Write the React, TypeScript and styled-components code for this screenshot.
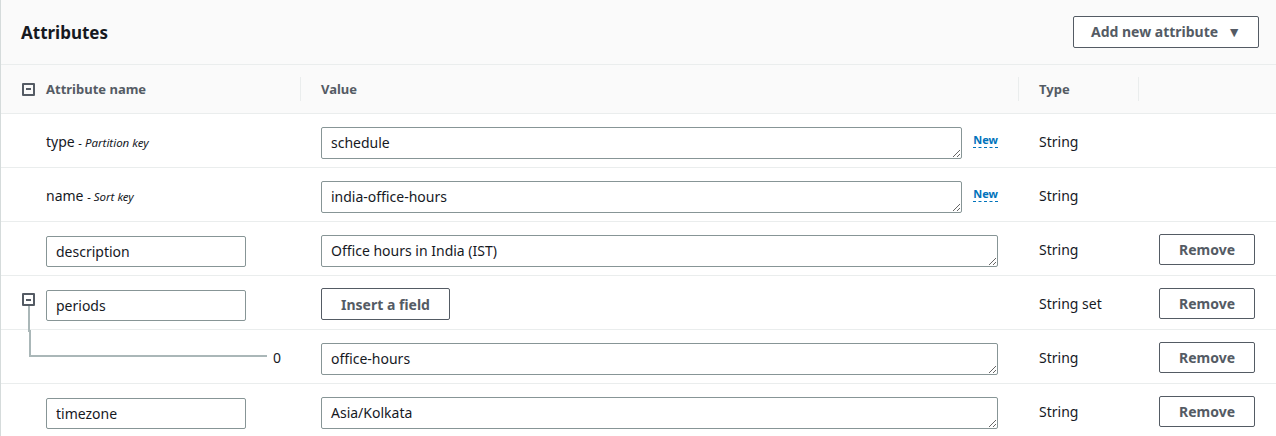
import React from 'react';
import styled, { createGlobalStyle } from 'styled-components';

const GlobalStyle = createGlobalStyle`
	html, body {
		margin: 0;
		padding: 0;
		background: #ffffff;
	}
	body {
		font-family: 'Noto Sans', 'Open Sans', 'Liberation Sans', sans-serif;
		color: #16191f;
	}
`;

interface Attr {
	kind: 'key' | 'field' | 'set' | 'item';
	name: string;
	keyLabel?: string;
	value?: string;
	type: string;
	isNew?: boolean;
	removable?: boolean;
}

const rows: Attr[] = [
	{ kind: 'key', name: 'type', keyLabel: 'Partition key', value: 'schedule', type: 'String', isNew: true },
	{ kind: 'key', name: 'name', keyLabel: 'Sort key', value: 'india-office-hours', type: 'String', isNew: true },
	{ kind: 'field', name: 'description', value: 'Office hours in India (IST)', type: 'String', removable: true },
	{ kind: 'set', name: 'periods', type: 'String set', removable: true },
	{ kind: 'item', name: '0', value: 'office-hours', type: 'String', removable: true },
	{ kind: 'field', name: 'timezone', value: 'Asia/Kolkata', type: 'String', removable: true },
];

const App: React.FC = () => {
	return (
		<Page>
			<GlobalStyle />
			<Header>
				<Title>Attributes</Title>
				<OutlineButton>
					Add new attribute <Caret>▼</Caret>
				</OutlineButton>
			</Header>
			<HeadRow>
				<HeadCell>
					<Toggle />
					Attribute name
				</HeadCell>
				<HeadCell divider>Value</HeadCell>
				<HeadCell divider>Type</HeadCell>
				<HeadCell divider />
			</HeadRow>
			{rows.map((r, i) => (
				<Row key={i}>
					<NameCell tree={r.kind === 'set' || r.kind === 'item'}>
						{r.kind === 'key' && (
							<KeyName>
								{r.name} <KeyLabel>- {r.keyLabel}</KeyLabel>
							</KeyName>
						)}
						{r.kind === 'field' && <NameInput defaultValue={r.name} />}
						{r.kind === 'set' && (
							<>
								<Toggle tree />
								<NameInput defaultValue={r.name} />
							</>
						)}
						{r.kind === 'item' && (
							<>
								<Branch />
								<Index>{r.name}</Index>
							</>
						)}
					</NameCell>
					<ValueCell>
						{r.kind === 'set' ? (
							<OutlineButton small>Insert a field</OutlineButton>
						) : (
							<ValueInput rows={1} defaultValue={r.value} narrow={r.isNew} />
						)}
						{r.isNew && <NewTag>New</NewTag>}
					</ValueCell>
					<TypeCell>{r.type}</TypeCell>
					<ActionCell>{r.removable && <RemoveButton>Remove</RemoveButton>}</ActionCell>
				</Row>
			))}
		</Page>
	);
};

const Page = styled.div`
	width: 1276px;
	border-left: 1px solid #d5dbdb;
	box-sizing: border-box;
`;

const Header = styled.div`
	height: 64px;
	display: flex;
	align-items: center;
	justify-content: space-between;
	padding: 0 17px 0 20px;
	background: #fafafa;
	border-bottom: 1px solid #eaeded;
	box-sizing: content-box;
`;

const Title = styled.h2`
	margin: 0;
	font-size: 17px;
	font-weight: 700;
	color: #16191f;
`;

const OutlineButton = styled.button<{ small?: boolean }>`
	height: 32px;
	padding: 0;
	margin-top: -1px;
	background: #ffffff;
	border: 1px solid #545b64;
	border-radius: 2px;
	font-family: inherit;
	font-size: 14px;
	font-weight: 700;
	color: #545b64;
	display: inline-flex;
	align-items: center;
	justify-content: center;
	white-space: nowrap;
	box-sizing: border-box;
	width: ${(p) => (p.small ? '129px' : '186px')};
`;

const Caret = styled.span`
	font-size: 14px;
	margin-left: 9px;
	margin-top: -1px;
`;

const RowGrid = styled.div`
	display: grid;
	grid-template-columns: 299px 718px 120px 1fr;
	border-bottom: 1px solid #eaeded;
	box-sizing: border-box;
`;

const HeadRow = styled(RowGrid)`
	height: 49px;
	background: #fafafa;
	align-items: center;
`;

const HeadCell = styled.div<{ divider?: boolean }>`
	display: flex;
	align-items: center;
	height: 24px;
	padding-left: ${(p) => (p.divider ? '20px' : '21px')};
	border-left: ${(p) => (p.divider ? '1px solid #eaeded' : 'none')};
	font-size: 13px;
	font-weight: 700;
	color: #545b64;
`;

const Toggle = styled.span<{ tree?: boolean }>`
	position: relative;
	width: 13px;
	height: 13px;
	border: 2px solid #545b64;
	border-radius: 1px;
	box-sizing: border-box;
	margin-right: 11px;
	flex-shrink: 0;
	&:before {
		content: '';
		position: absolute;
		left: 2px;
		right: 2px;
		top: 3.5px;
		height: 2px;
		background: #545b64;
	}
	${(p) =>
		p.tree
			? `
		margin-top: 4px;
		&:after {
			content: '';
			position: absolute;
			left: 3.5px;
			top: 11px;
			width: 2px;
			height: 26px;
			background: #aab7b8;
		}
	`
			: ''}
`;

const Row = styled(RowGrid)`
	height: 54px;
	align-items: start;
	padding-top: 13px;
`;

const NameCell = styled.div<{ tree?: boolean }>`
	display: flex;
	align-items: flex-start;
	height: 32px;
	padding: 0 19px 0 ${(p) => (p.tree ? '21px' : '45px')};
`;

const KeyName = styled.span`
	font-size: 14px;
	line-height: 30px;
	color: #16191f;
`;

const KeyLabel = styled.span`
	font-size: 11.5px;
	font-style: italic;
`;

const NameInput = styled.input`
	width: 200px;
	height: 31px;
	padding: 0 9px;
	border: 1px solid #879596;
	border-radius: 2px;
	font-family: inherit;
	font-size: 14px;
	color: #16191f;
	box-sizing: border-box;
	margin-top: 1px;
`;

const Branch = styled.div`
	flex: 1;
	height: 27px;
	margin: -13px 0 0 7px;
	border-left: 2px solid #aab7b8;
	border-bottom: 2px solid #aab7b8;
	box-sizing: border-box;
`;

const Index = styled.span`
	font-size: 14px;
	line-height: 30px;
	margin-left: 6px;
`;

const ValueCell = styled.div`
	display: flex;
	align-items: flex-start;
	padding: 0 20px 0 21px;
`;

const ValueInput = styled.textarea<{ narrow?: boolean }>`
	width: ${(p) => (p.narrow ? '642px' : '677px')};
	height: 32px;
	padding: 6px 9px 0;
	border: 1px solid #879596;
	border-radius: 2px;
	font-family: inherit;
	font-size: 14px;
	line-height: 18px;
	color: #16191f;
	box-sizing: border-box;
	resize: both;
	overflow: hidden;
	margin: 0;
	display: block;
`;

const NewTag = styled.span`
	margin: 5px 0 0 11px;
	font-size: 11px;
	font-weight: 700;
	color: #0073bb;
	border-bottom: 1px dashed #0073bb;
	line-height: 15px;
`;

const TypeCell = styled.div`
	padding-left: 21px;
	font-size: 14px;
	line-height: 30px;
	color: #16191f;
`;

const ActionCell = styled.div`
	padding-left: 21px;
`;

const RemoveButton = styled.button`
	width: 96px;
	height: 31px;
	margin-top: -1px;
	padding: 0 0 1px;
	background: #ffffff;
	border: 1px solid #545b64;
	border-radius: 2px;
	font-family: inherit;
	font-size: 14px;
	font-weight: 700;
	color: #545b64;
	display: block;
`;

export default App;
